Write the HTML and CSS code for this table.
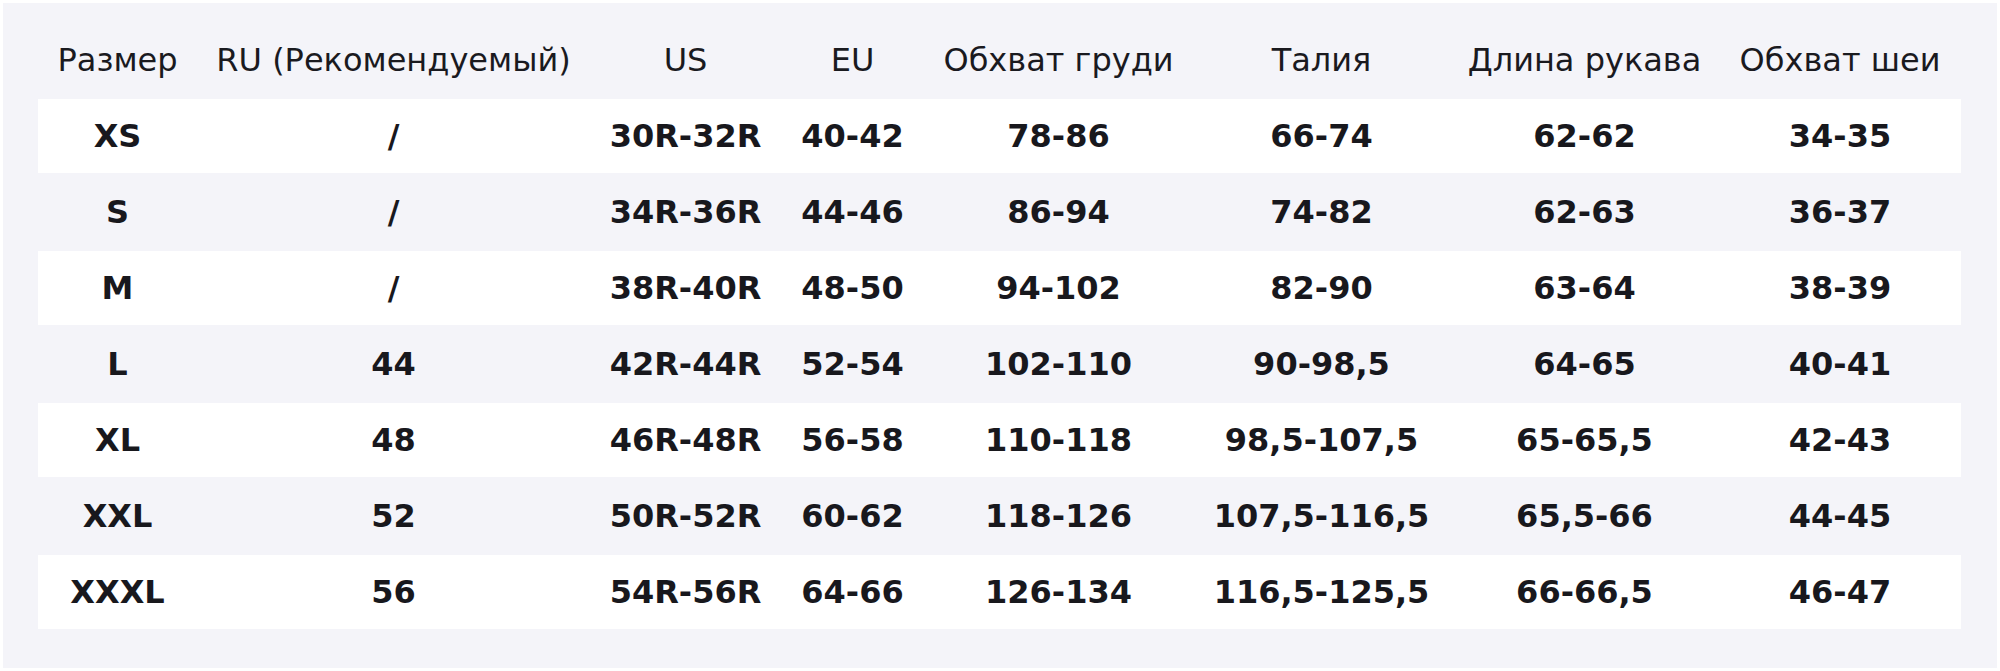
FILE: index.html
```html
<!DOCTYPE html>
<html lang="ru">
<head>
<meta charset="utf-8">
<title>Таблица размеров</title>
<link rel="stylesheet" href="styles.css">
</head>
<body>
<div class="sheet">
  <table class="sizes">
    <colgroup>
      <col class="c1"><col class="c2"><col class="c3"><col class="c4">
      <col class="c5"><col class="c6"><col class="c7"><col class="c8">
    </colgroup>
    <thead>
      <tr>
        <th>Размер</th><th>RU (Рекомендуемый)</th><th>US</th><th>EU</th>
        <th>Обхват груди</th><th>Талия</th><th>Длина рукава</th><th>Обхват шеи</th>
      </tr>
    </thead>
    <tbody>
      <tr class="odd"><td>XS</td><td>/</td><td>30R-32R</td><td>40-42</td><td>78-86</td><td>66-74</td><td>62-62</td><td>34-35</td></tr>
      <tr><td>S</td><td>/</td><td>34R-36R</td><td>44-46</td><td>86-94</td><td>74-82</td><td>62-63</td><td>36-37</td></tr>
      <tr class="odd"><td>M</td><td>/</td><td>38R-40R</td><td>48-50</td><td>94-102</td><td>82-90</td><td>63-64</td><td>38-39</td></tr>
      <tr><td>L</td><td>44</td><td>42R-44R</td><td>52-54</td><td>102-110</td><td>90-98,5</td><td>64-65</td><td>40-41</td></tr>
      <tr class="odd"><td>XL</td><td>48</td><td>46R-48R</td><td>56-58</td><td>110-118</td><td>98,5-107,5</td><td>65-65,5</td><td>42-43</td></tr>
      <tr><td>XXL</td><td>52</td><td>50R-52R</td><td>60-62</td><td>118-126</td><td>107,5-116,5</td><td>65,5-66</td><td>44-45</td></tr>
      <tr class="odd"><td>XXXL</td><td>56</td><td>54R-56R</td><td>64-66</td><td>126-134</td><td>116,5-125,5</td><td>66-66,5</td><td>46-47</td></tr>
    </tbody>
  </table>
</div>
</body>
</html>
```
FILE: styles.css
```css
html, body {
  margin: 0;
  padding: 0;
  background: #ffffff;
}
body {
  padding: 3px;
  font-family: "DejaVu Sans", sans-serif;
  color: #18181d;
}
.sheet {
  background: #f4f4f9;
  height: 665px;
  box-sizing: border-box;
  padding: 18px 35px 35px 35px;
}
.sizes {
  table-layout: fixed;
  width: 1923px;
  border-collapse: separate;
  border-spacing: 0 2px;
}
.c1 { width: 159px; }
.c2 { width: 393px; }
.c3 { width: 191px; }
.c4 { width: 143px; }
.c5 { width: 269px; }
.c6 { width: 257px; }
.c7 { width: 269px; }
.c8 { width: 242px; }
.sizes th,
.sizes td {
  height: 74px;
  padding: 0;
  text-align: center;
  vertical-align: middle;
  font-size: 32px;
  white-space: nowrap;
}
.sizes th {
  font-weight: normal;
  color: #1a1a1f;
}
.sizes td {
  font-weight: bold;
}
.sizes tr.odd td {
  background: #ffffff;
}
```
